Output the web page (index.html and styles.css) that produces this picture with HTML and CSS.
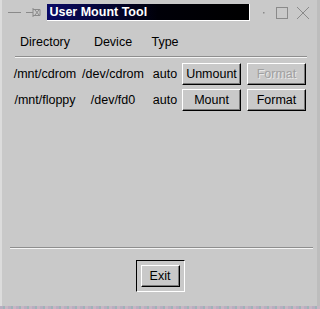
FILE: index.html
```html
<!DOCTYPE html>
<html>
<head>
<meta charset="utf-8">
<link rel="stylesheet" href="styles.css">
</head>
<body>
<div class="window">
  <div class="titlebar">
    <div class="tb-left">
      <svg width="40" height="16" viewBox="0 0 40 16">
        <path d="M6 8.5H19" stroke="#8a8a8a" stroke-width="1"/>
        <path d="M24 8.5H31M31 4V13M31 5.5H38V11.5H31M33 6L37 11M37 6L33 11" stroke="#8a8a8a" stroke-width="1" fill="none"/>
      </svg>
    </div>
    <div class="tb-title">User Mount Tool</div>
    <div class="tb-right">
      <svg width="60" height="16" viewBox="0 0 60 16">
        <rect x="6" y="8" width="1.5" height="1.5" fill="#8a8a8a"/>
        <rect x="19.5" y="3.5" width="11" height="11" stroke="#8a8a8a" fill="none"/>
        <path d="M40 3L52 15M52 3L40 15" stroke="#8a8a8a" stroke-width="1"/>
      </svg>
    </div>
  </div>
  <div class="content">
    <div class="grid head">
      <div class="cell">Directory</div>
      <div class="cell">Device</div>
      <div class="cell">Type</div>
    </div>
    <div class="rule top-rule"></div>
    <div class="grid rows">
      <div class="cell">/mnt/cdrom</div>
      <div class="cell">/dev/cdrom</div>
      <div class="cell">auto</div>
      <button class="btn">Unmount</button>
      <button class="btn last disabled">Format</button>
      <div class="cell">/mnt/floppy</div>
      <div class="cell">/dev/fd0</div>
      <div class="cell">auto</div>
      <button class="btn">Mount</button>
      <button class="btn last">Format</button>
    </div>
  </div>
  <div class="rule bottom-rule"></div>
  <div class="footer">
    <div class="default-frame"><button class="btn exit">Exit</button></div>
  </div>
  <div class="desktop"></div>
</div>
</body>
</html>
```
FILE: styles.css
```css
* { box-sizing: border-box; }
html, body { margin: 0; padding: 0; }
body {
  width: 320px;
  height: 309px;
  overflow: hidden;
  background: #c9c9c9;
  font-family: "Liberation Sans", Arial, sans-serif;
  font-size: 12.5px;
  color: #000;
}
.window {
  width: 320px;
  height: 309px;
  display: flex;
  flex-direction: column;
  background: #c9c9c9;
  border-left: 2px solid #dcdcdc;
  border-right: 3px solid #bdbdbd;
}
.titlebar {
  height: 24px;
  display: flex;
  align-items: flex-start;
  padding-top: 4px;
}
.tb-left { width: 46px; height: 16px; }
.tb-title {
  width: 205px;
  height: 17px;
  background: linear-gradient(to right, #0a0a66, #000008 55%, #000000);
  border-right: 1px solid #fff;
  border-bottom: 1px solid #fff;
  color: #fff;
  font-weight: bold;
  font-size: 12.5px;
  line-height: 16px;
  padding-left: 2px;
}
.tb-right { margin-left: 7px; height: 16px; }
.content { padding: 0 0 0 10px; }
.grid {
  display: grid;
  grid-template-columns: 66px 70px 34px 59px 65px;
  align-items: center;
}
.head { height: 28px; margin-top: 4px; }
.cell { text-align: center; white-space: nowrap; }
.rule {
  height: 2px;
  border-top: 1px solid #8e8e8e;
  border-bottom: 1px solid #f4f4f4;
}
.top-rule { width: 292px; margin-left: 3px; }
.rows { row-gap: 4px; margin-top: 5px; }
.btn {
  height: 22px;
  width: 59px;
  padding: 0;
  font: inherit;
  color: #000;
  background: #c9c9c9;
  border: 1px solid;
  border-color: #fff #000 #000 #fff;
  box-shadow: inset -1px -1px 0 #7a7a7a;
}
.btn.last { justify-self: end; }
.btn.disabled { color: #a0a0a0; text-shadow: 1px 1px 0 #e8e8e8; }
.bottom-rule { width: 303px; margin-left: 8px; margin-top: auto; }
.footer {
  height: 57px;
  display: flex;
  justify-content: center;
  padding-top: 11px;
  padding-left: 1px;
}
.default-frame {
  width: 49px;
  height: 32px;
  border: 1px solid;
  border-color: #000 #fff #fff #000;
  display: flex;
  align-items: center;
  justify-content: center;
}
.btn.exit { width: 39px; height: 22px; }
.desktop {
  height: 3px;
  background: repeating-linear-gradient(to right, #b9aec0 0 3px, #9fb3b8 3px 5px, #c7b6c4 5px 8px);
  margin-left: -2px;
  margin-right: -3px;
}
```
